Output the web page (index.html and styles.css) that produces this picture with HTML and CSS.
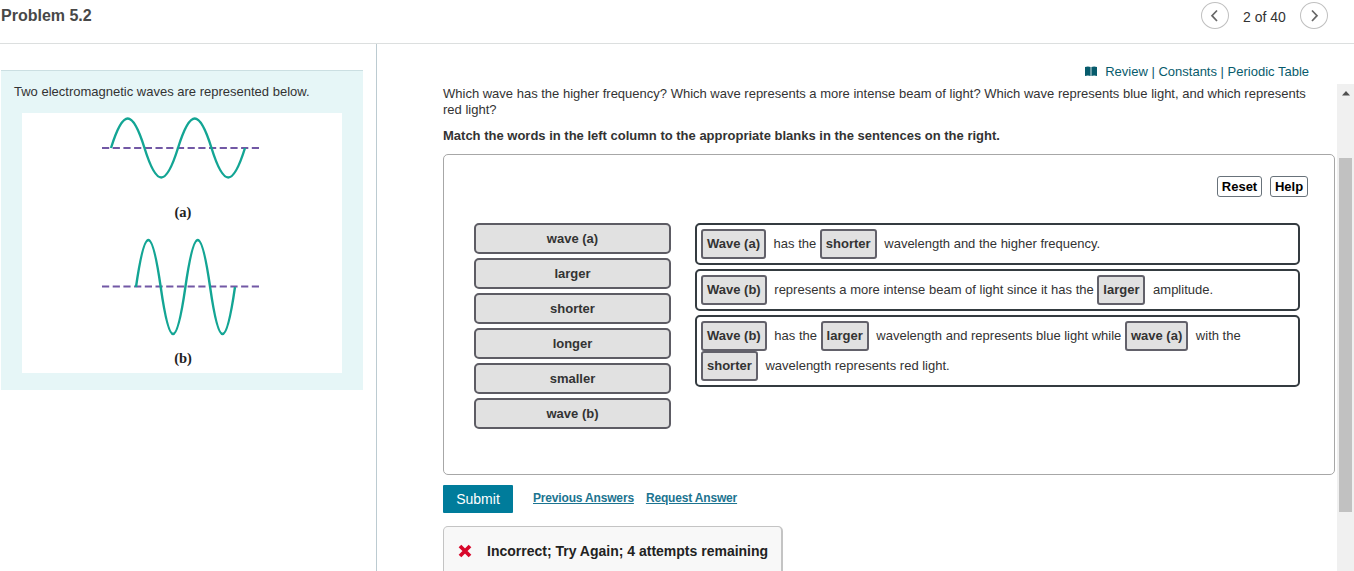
FILE: index.html
```html
<!DOCTYPE html>
<html lang="en">
<head>
    <meta charset="UTF-8">
    <meta name="viewport" content="width=device-width, initial-scale=1.0">
    <title>Problem 5.2</title>
    <link rel="stylesheet" href="styles.css">
</head>
<body>
    <header class="header">
        <h1 class="title">Problem 5.2</h1>
        <nav class="pager">
            <button class="pager-btn" aria-label="Previous">
                <svg width="26" height="26" viewBox="0 0 26 26"><path d="M15 7.5L10 12.7L15 18"/></svg>
            </button>
            <span class="pager-text">2 of 40</span>
            <button class="pager-btn" aria-label="Next">
                <svg width="26" height="26" viewBox="0 0 26 26"><path d="M11 7.5L16 12.7L11 18"/></svg>
            </button>
        </nav>
    </header>

    <main class="content">
        <aside class="side">
            <div class="intro">
                <p class="intro-text">Two electromagnetic waves are represented below.</p>
                <svg class="figure" width="320" height="260" viewBox="0 0 320 260">
                    <path class="axis" d="M80 35H237"/>
                    <path class="wave" d="M89 35C101.2 -4.3 110.3 -4.3 122.5 35S143.8 74.3 156 35S177.3 -4.3 189.5 35S210.8 74.3 223 35"/>
                    <text class="caption" x="161" y="103.5">(a)</text>
                    <path class="axis" d="M80 173.5H237"/>
                    <path class="wave" d="M114 174C123 111.3 129.7 111.3 138.7 174S154.4 236.7 163.4 174S179.1 111.3 188.1 174S204 236.7 213 174"/>
                    <text class="caption" x="161" y="250">(b)</text>
                </svg>
            </div>
        </aside>

        <section class="main">
            <div class="resources">
                <svg width="12" height="11" viewBox="0 0 12 11"><path d="M0 1Q3 0 5.6 1V10Q3 9 0 10ZM6.4 1Q9 0 12 1V10Q9 9 6.4 10Z"/></svg>
                <span class="resources-links">Review | Constants | Periodic Table</span>
            </div>
            <div class="scroll-row">
                <div class="question">
                    <p class="prompt">Which wave has the higher frequency? Which wave represents a more intense beam of light? Which wave represents blue light, and which represents<br>red light?</p>
                    <p class="instruction">Match the words in the left column to the appropriate blanks in the sentences on the right.</p>

                    <div class="activity">
                        <div class="tools">
                            <button class="tool-btn reset">Reset</button>
                            <button class="tool-btn help">Help</button>
                        </div>
                        <div class="columns">
                            <div class="words">
                                <div class="word">wave (a)</div>
                                <div class="word">larger</div>
                                <div class="word">shorter</div>
                                <div class="word">longer</div>
                                <div class="word">smaller</div>
                                <div class="word">wave (b)</div>
                            </div>
                            <div class="sentences">
                                <div class="sentence"><span class="chip">Wave (a)</span> has the <span class="chip">shorter</span> wavelength and the higher frequency.</div>
                                <div class="sentence"><span class="chip">Wave (b)</span> represents a more intense beam of light since it has the <span class="chip">larger</span> amplitude.</div>
                                <div class="sentence"><span class="chip">Wave (b)</span> has the <span class="chip">larger</span> wavelength and represents blue light while <span class="chip">wave (a)</span> with the<br><span class="chip">shorter</span> wavelength represents red light.</div>
                            </div>
                        </div>
                    </div>

                    <div class="actions">
                        <button class="submit">Submit</button>
                        <a class="link" href="#">Previous Answers</a>
                        <a class="link" href="#">Request Answer</a>
                    </div>

                    <div class="feedback">
                        <svg width="14" height="14" viewBox="0 0 14 14"><path d="M2 2L12 12M12 2L2 12"/></svg>
                        <span class="feedback-text">Incorrect; Try Again; 4 attempts remaining</span>
                    </div>
                </div>
                <div class="scrollbar">
                    <svg width="8" height="5" viewBox="0 0 8 5"><path d="M0 4.5L4 0L8 4.5Z"/></svg>
                    <div class="thumb"></div>
                </div>
            </div>
        </section>
    </main>
</body>
</html>
```
FILE: styles.css
```css
* {
    box-sizing: border-box;
}
body {
    margin: 0;
    height: 571px;
    overflow: hidden;
    display: flex;
    flex-direction: column;
    background-color: #fff;
    color: #333;
    font-family: "Liberation Sans", Arial, sans-serif;
    font-size: 13px;
}
p, h1 {
    margin: 0;
}
button {
    font-family: inherit;
    padding: 0;
}
.header {
    height: 44px;
    flex: none;
    display: flex;
    justify-content: space-between;
    padding: 0 26px 0 1px;
    border-bottom: 1px solid #dcdfdf;
}
.title {
    margin-top: 6px;
    font-size: 16px;
    line-height: 19px;
    color: #484848;
}
.pager {
    display: flex;
    align-items: flex-start;
    padding-top: 2px;
}
.pager-btn {
    width: 28px;
    height: 27px;
    border: 1px solid #c0c0c0;
    border-radius: 50%;
    background-color: #fff;
    display: flex;
    align-items: center;
    justify-content: center;
}
.pager-btn path {
    fill: none;
    stroke: #666;
    stroke-width: 1.7;
}
.pager-text {
    width: 71px;
    padding-top: 7px;
    text-align: center;
    font-size: 14px;
    line-height: 16px;
}
.content {
    flex: 1;
    min-height: 0;
    display: flex;
}
.side {
    width: 377px;
    flex: none;
    padding: 26px 13px 0 1px;
    border-right: 1px solid #bccbd1;
}
.intro {
    height: 320px;
    padding: 13px 21px 0;
    border-top: 1px solid #cbdfe2;
    background-color: #e6f6f7;
}
.intro-text {
    margin-left: -8px;
    line-height: 16px;
    white-space: nowrap;
}
.figure {
    display: block;
    margin-top: 13px;
    background-color: #fff;
}
.axis {
    stroke: #7258a5;
    stroke-width: 2.2;
    stroke-dasharray: 7.2 3.5;
}
.wave {
    fill: none;
    stroke: #13a594;
    stroke-width: 2.4;
}
.caption {
    font-family: "Liberation Serif", serif;
    font-size: 14.5px;
    font-weight: bold;
    text-anchor: middle;
    fill: #222;
}
.main {
    flex: 1;
    min-width: 0;
    display: flex;
    flex-direction: column;
}
.resources {
    height: 40px;
    flex: none;
    display: flex;
    justify-content: flex-end;
    align-items: flex-start;
    gap: 8px;
    padding: 19px 45px 0 0;
    color: #075b6c;
}
.resources svg {
    margin-top: 3px;
    fill: #075b6c;
}
.resources-links {
    line-height: 18px;
}
.scroll-row {
    flex: 1;
    min-height: 0;
    display: flex;
}
.question {
    width: 892px;
    margin-left: 66px;
    padding-top: 2px;
    flex: none;
}
.prompt {
    line-height: 16px;
    white-space: nowrap;
}
.instruction {
    margin-top: 10px;
    font-weight: bold;
    line-height: 16px;
}
.activity {
    height: 321px;
    margin-top: 10px;
    padding: 21px 26px 0 30px;
    border: 1px solid #a7a7a7;
    border-radius: 5px;
}
.tools {
    display: flex;
    justify-content: flex-end;
    gap: 8px;
}
.tool-btn {
    height: 21px;
    border: 1px solid #68727a;
    border-radius: 3px;
    background-color: #fff;
    color: #000;
    font-size: 13px;
    font-weight: bold;
}
.reset {
    width: 45px;
}
.help {
    width: 38px;
}
.columns {
    display: flex;
    gap: 24px;
    margin-top: 26px;
}
.words {
    width: 197px;
    display: flex;
    flex-direction: column;
    gap: 4px;
}
.word {
    height: 31px;
    border: 2px solid #5d5c64;
    border-radius: 5px;
    background-color: #e1e1e1;
    text-align: center;
    font-weight: bold;
    line-height: 27px;
}
.sentences {
    width: 605px;
    display: flex;
    flex-direction: column;
    gap: 4px;
}
.sentence {
    padding: 4px;
    border: 2px solid #343b40;
    border-radius: 5px;
    line-height: 30px;
    white-space: nowrap;
}
.chip {
    display: inline-block;
    height: 30px;
    margin-right: 4px;
    padding: 0 4px;
    border: 2px solid #62616a;
    border-radius: 3px;
    background-color: #e1e1e1;
    font-weight: bold;
    line-height: 26px;
    vertical-align: top;
}
.actions {
    display: flex;
    align-items: flex-start;
    gap: 12px;
    margin-top: 10px;
}
.submit {
    width: 70px;
    height: 28px;
    margin-right: 8px;
    border: none;
    border-radius: 1px;
    background-color: #007c9b;
    color: #fff;
    font-size: 14px;
}
.link {
    margin-top: 6px;
    color: #1c7490;
    font-size: 12px;
    font-weight: bold;
    letter-spacing: -0.17px;
    line-height: 14px;
}
.feedback {
    width: 340px;
    height: 60px;
    display: flex;
    align-items: flex-start;
    gap: 15px;
    margin-top: 13px;
    padding: 17px 0 0 14px;
    border: 1px solid #c4c4c4;
    border-right-width: 2px;
    border-radius: 5px;
    background-color: #f8f8f8;
    color: #222;
}
.feedback path {
    stroke: #d8072b;
    stroke-width: 3.8;
}
.feedback-text {
    font-size: 14px;
    font-weight: bold;
    line-height: 15px;
    white-space: nowrap;
}
.scrollbar {
    width: 17px;
    margin-left: 2px;
    flex: none;
    display: flex;
    flex-direction: column;
    align-items: center;
    padding-top: 7px;
    background-color: #f0f0f0;
}
.scrollbar svg {
    flex: none;
    fill: #505050;
}
.thumb {
    width: 13px;
    height: 354px;
    margin-top: 62px;
    flex: none;
    background-color: #c1c1c1;
}
```
